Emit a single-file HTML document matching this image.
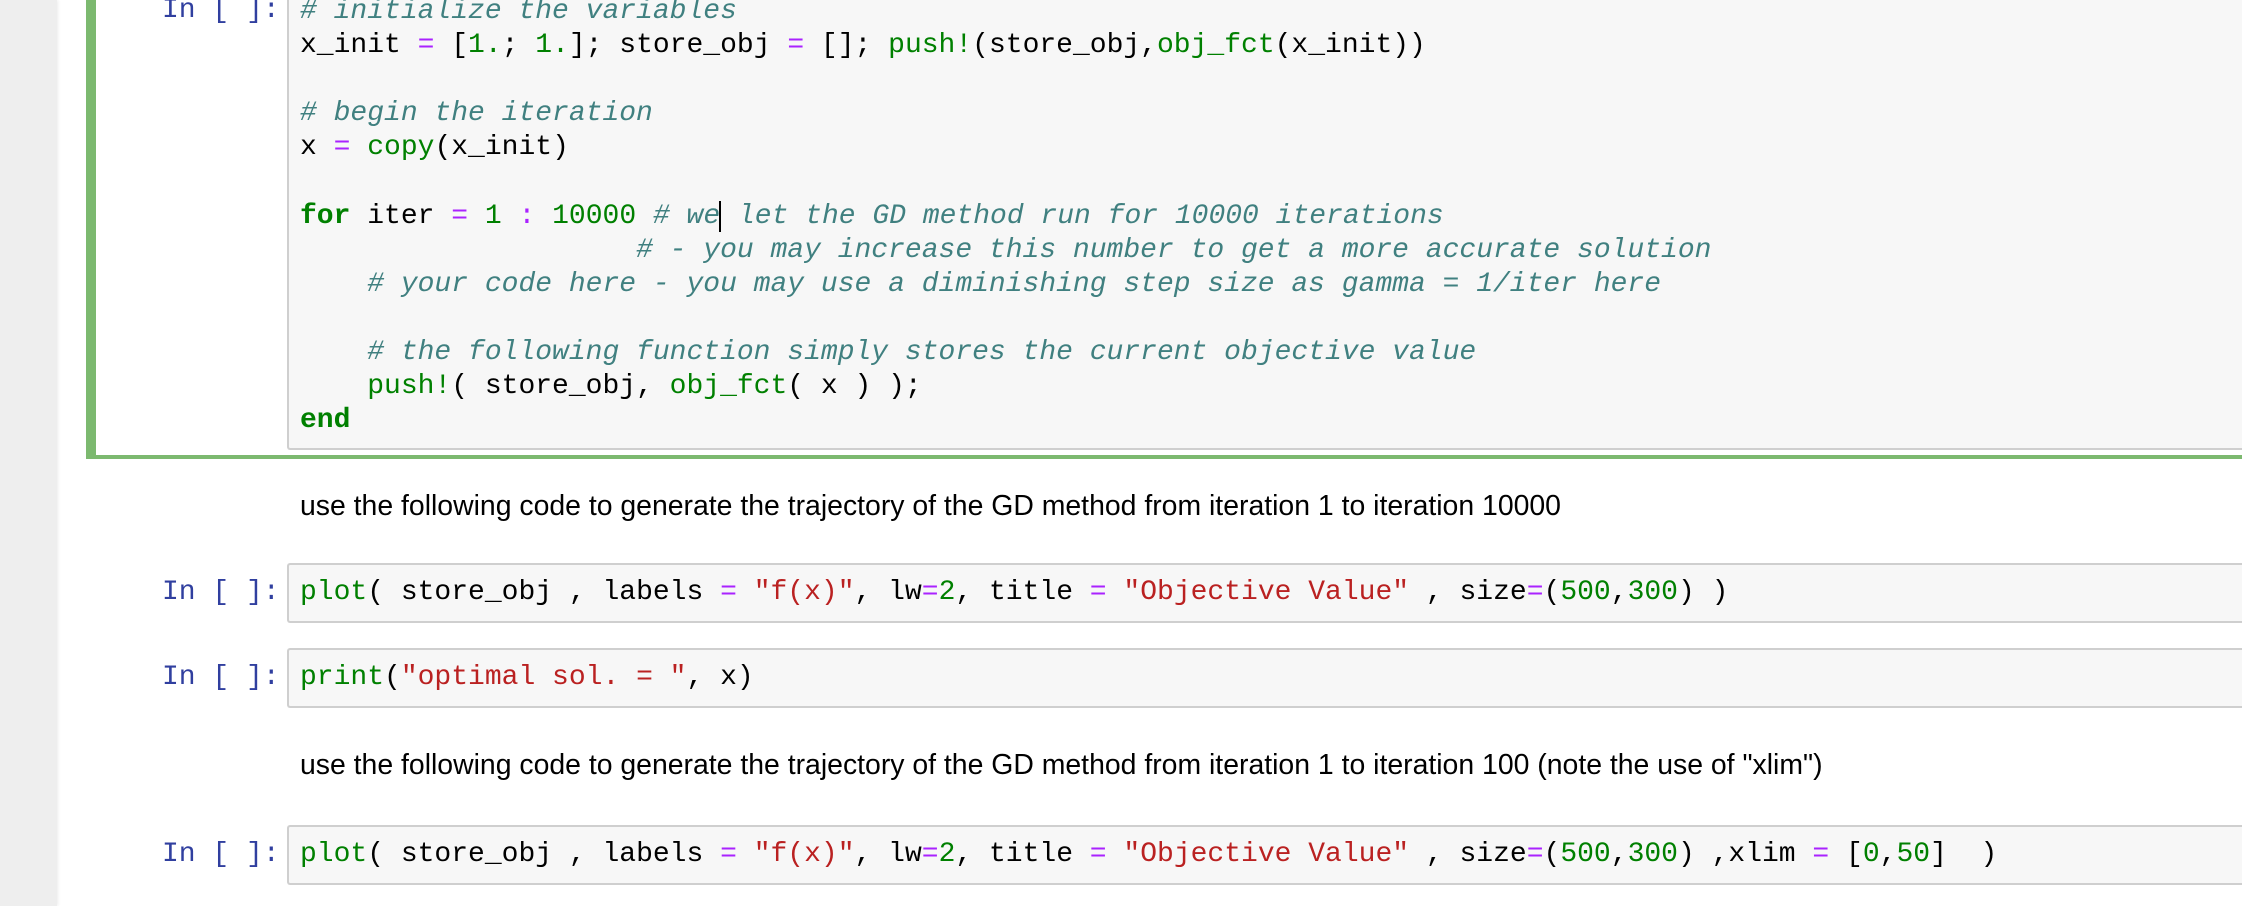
<!DOCTYPE html>
<html><head><meta charset="utf-8"><style>
html,body{margin:0;padding:0;width:2242px;height:906px;overflow:hidden;background:#fff;}
.side{position:absolute;left:0;top:0;width:57px;height:906px;background:#eee;box-shadow:1px 0 3px rgba(0,0,0,.08);}
.mono{font-family:"Liberation Mono",monospace;font-size:28px;white-space:pre;}
.prompt{position:absolute;left:162px;color:#303F9F;font-family:"Liberation Mono",monospace;font-size:28px;white-space:pre;}
.box{position:absolute;left:287px;right:0;background:#f7f7f7;border:2px solid #cfcfcf;border-right:none;border-radius:3px 0 0 3px;}
.c{color:#408080;font-style:italic}
.k{color:#008000;font-weight:bold}
.b{color:#008000}
.o{color:#AA22FF}
.n{color:#008000}
.s{color:#BA2121}
.txt{position:absolute;left:300px;font-family:"Liberation Sans",Helvetica,sans-serif;font-size:28.4px;color:#000;}
</style></head><body>
<div class="side"></div>
<div style="position:absolute;left:86px;top:-10px;right:0;height:465px;border-left:10px solid #7cb96f;border-bottom:4px solid #7cb96f;"></div>
<div class="box" style="top:-10px;height:456px;"></div>
<div class="prompt" style="top:-5px">In [ ]:</div>
<div class="mono" style="position:absolute;left:300px;top:-5px;line-height:34.1px;color:#000"><span class="c"># initialize the variables</span>
x_init <span class="o">=</span> [<span class="n">1.</span>; <span class="n">1.</span>]; store_obj <span class="o">=</span> []; <span class="b">push!</span>(store_obj,<span class="b">obj_fct</span>(x_init))

<span class="c"># begin the iteration</span>
x <span class="o">=</span> <span class="b">copy</span>(x_init)

<span class="k">for</span> iter <span class="o">=</span> <span class="n">1</span> <span class="o">:</span> <span class="n">10000</span> <span class="c"># we<span style="border-left:2px solid #000;margin-left:-1px"></span> let the GD method run for 10000 iterations</span>
                    <span class="c"># - you may increase this number to get a more accurate solution</span>
    <span class="c"># your code here - you may use a diminishing step size as gamma = 1/iter here</span>

    <span class="c"># the following function simply stores the current objective value</span>
    <span class="b">push!</span>( store_obj, <span class="b">obj_fct</span>( x ) );
<span class="k">end</span></div>

<div class="txt" style="top:490px">use the following code to generate the trajectory of the GD method from iteration 1 to iteration 10000</div>

<div class="box" style="top:563px;height:56px;"></div>
<div class="prompt" style="top:577px">In [ ]:</div>
<div class="mono" style="position:absolute;left:300px;top:577px;"><span class="b">plot</span>( store_obj , labels <span class="o">=</span> <span class="s">"f(x)"</span>, lw<span class="o">=</span><span class="n">2</span>, title <span class="o">=</span> <span class="s">"Objective Value"</span> , size<span class="o">=</span>(<span class="n">500</span>,<span class="n">300</span>) )</div>

<div class="box" style="top:648px;height:56px;"></div>
<div class="prompt" style="top:662px">In [ ]:</div>
<div class="mono" style="position:absolute;left:300px;top:662px;"><span class="b">print</span>(<span class="s">"optimal sol. = "</span>, x)</div>

<div class="txt" style="top:749px">use the following code to generate the trajectory of the GD method from iteration 1 to iteration 100 (note the use of "xlim")</div>

<div class="box" style="top:825px;height:56px;"></div>
<div class="prompt" style="top:839px">In [ ]:</div>
<div class="mono" style="position:absolute;left:300px;top:839px;"><span class="b">plot</span>( store_obj , labels <span class="o">=</span> <span class="s">"f(x)"</span>, lw<span class="o">=</span><span class="n">2</span>, title <span class="o">=</span> <span class="s">"Objective Value"</span> , size<span class="o">=</span>(<span class="n">500</span>,<span class="n">300</span>) ,xlim <span class="o">=</span> [<span class="n">0</span>,<span class="n">50</span>]  )</div>
</body></html>
